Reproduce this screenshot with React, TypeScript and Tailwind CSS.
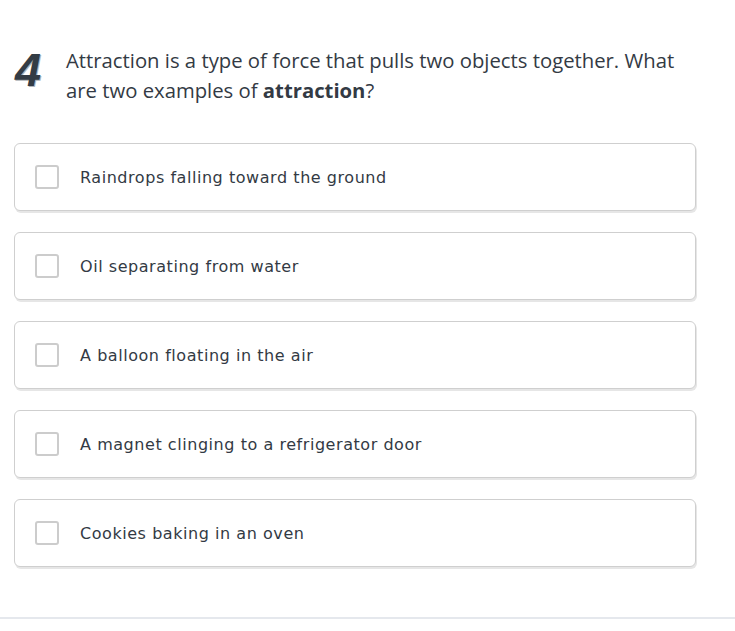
import React from "react";

const options = [
  "Raindrops falling toward the ground",
  "Oil separating from water",
  "A balloon floating in the air",
  "A magnet clinging to a refrigerator door",
  "Cookies baking in an oven",
];

export default function App() {
  return (
    <div className="w-[735px] h-[631px] bg-white text-[#333a44] overflow-hidden" style={{ fontFamily: '"Open Sans", sans-serif' }}>
      <div className="pl-[14px] pr-[20px] pt-[45px]">
        <div className="flex items-start">
          <div className="w-[52px] shrink-0 pl-[1px] pt-[2px] text-[47px] leading-[46px] font-bold italic text-[#333c45]" style={{ fontFamily: '"Liberation Sans", sans-serif', textShadow: "1px 1px 0 #b0b5ba" }}>
            4
          </div>
          <p className="text-[20.3px] leading-[30px] text-[#333a44]" style={{ fontFamily: '"Open Sans", sans-serif' }}>
            Attraction is a type of force that pulls two objects together. What
            <br />
            are two examples of <b className="font-bold">attraction</b>?
          </p>
        </div>
      </div>
      <div className="pl-[14px] pr-[39px] pt-[38px] flex flex-col gap-[21px]">
        {options.map((o) => (
          <label key={o} className="h-[68px] flex items-center border border-[#cfcfcf] rounded-[6px] shadow-[1px_2px_0_#e6e6e6] pl-[20px] bg-white">
            <span className="w-[24px] h-[24px] border-2 border-[#cccccc] rounded-[3px] shrink-0" />
            <span className="ml-[21px] pt-[1px] text-[16px] tracking-[0.55px] text-[#333a44]" style={{ fontFamily: '"DejaVu Sans", sans-serif' }}>{o}</span>
          </label>
        ))}
      </div>
      <div className="mt-[50px] h-[2px] bg-[#e5e8ed]" />
    </div>
  );
}
